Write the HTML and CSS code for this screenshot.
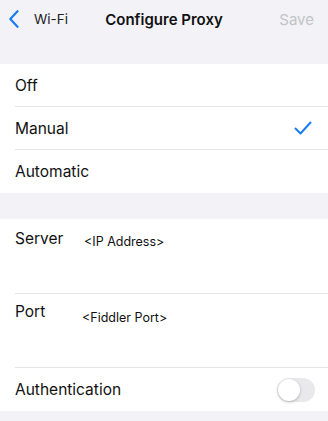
FILE: index.html
```html
<!DOCTYPE html>
<html lang="en">
<head>
  <meta charset="UTF-8" />
  <meta name="viewport" content="width=device-width, initial-scale=1.0" />
  <title>Configure Proxy</title>
  <link rel="stylesheet" href="styles.css">
</head>
<body>

<div class="pantalla">
  <!-- Barra de navegacion -->
  <div class="barra_nav">
    <a class="volver" href="#">
      <svg class="chevron" width="10" height="18" viewBox="0 0 10 18">
        <path d="M8.5 1.2 L1.3 9 L8.5 16.8" fill="none" stroke="#1a7cf5" stroke-width="2.2" stroke-linecap="round" stroke-linejoin="round"/>
      </svg>
      <span>Wi-Fi</span>
    </a>
    <h1 class="titulo">Configure Proxy</h1>
    <span class="guardar">Save</span>
  </div>

  <!-- Modo del proxy -->
  <ul class="grupo">
    <li class="fila"><span>Off</span></li>
    <li class="fila">
      <span>Manual</span>
      <svg class="check" width="18" height="14" viewBox="0 0 18 14">
        <path d="M1.5 7.5 L6.5 12.5 L16.5 1.5" fill="none" stroke="#1a7cf5" stroke-width="2" stroke-linecap="round" stroke-linejoin="round"/>
      </svg>
    </li>
    <li class="fila"><span>Automatic</span></li>
  </ul>

  <ul class="grupo">
    <li class="fila fila_alta">
      <span class="etiqueta">Server</span>
      <span class="valor">&lt;IP Address&gt;</span>
    </li>
    <li class="fila fila_alta">
      <span class="etiqueta">Port</span>
      <span class="valor valor_port">&lt;Fiddler Port&gt;</span>
    </li>
    <li class="fila">
      <span>Authentication</span>
      <span class="interruptor"></span>
    </li>
  </ul>
</div>

</body>
</html>
```

FILE: styles.css
```css
html, body {
  margin: 0;
  padding: 0;
  background: #f2f2f7;
  font-family: Inter, "Noto Sans", sans-serif;
  color: #111;
}

.pantalla {
  width: 328px;
  height: 421px;
  overflow: hidden;
}

.barra_nav {
  height: 38px;
  display: flex;
  align-items: center;
  position: relative;
  margin-bottom: 26px;
}

.volver {
  display: flex;
  align-items: center;
  gap: 15px;
  padding-left: 9px;
  text-decoration: none;
  color: #222;
  font-size: 13.5px;
}

.titulo {
  position: absolute;
  left: 0;
  right: 0;
  text-align: center;
  margin: 0;
  font-size: 15px;
  font-weight: 600;
  pointer-events: none;
}

.guardar {
  margin-left: auto;
  padding-right: 14px;
  color: #c3c3c6;
  font-size: 15px;
}

.grupo {
  list-style: none;
  margin: 0 0 26px;
  padding: 0;
  background: #fff;
}

.fila {
  height: 43px;
  display: flex;
  align-items: center;
  margin-left: 15px;
  padding-right: 13px;
  font-size: 15.5px;
  border-bottom: 1px solid #e6e6ea;
  box-sizing: border-box;
}

.fila:last-child {
  border-bottom: none;
}

.check {
  margin-left: auto;
  margin-right: 3px;
}

.fila_alta {
  height: 75px;
  align-items: flex-start;
  padding-top: 10px;
}

.fila_alta + .fila_alta {
  height: 74px;
  padding-top: 8px;
}

.etiqueta {
  width: 69px;
}

.valor {
  font-size: 12.5px;
  margin-top: 5px;
  color: #111;
}

.valor_port {
  margin-left: -2px;
  margin-top: 8px;
}

.interruptor {
  margin-left: auto;
  width: 38px;
  height: 24px;
  border-radius: 12px;
  background: #e9e9ec;
  position: relative;
}

.interruptor::after {
  content: "";
  position: absolute;
  left: 1px;
  top: 1px;
  width: 22px;
  height: 22px;
  border-radius: 50%;
  background: #fff;
  box-shadow: 0 1px 3px rgba(0, 0, 0, 0.25);
}
```
